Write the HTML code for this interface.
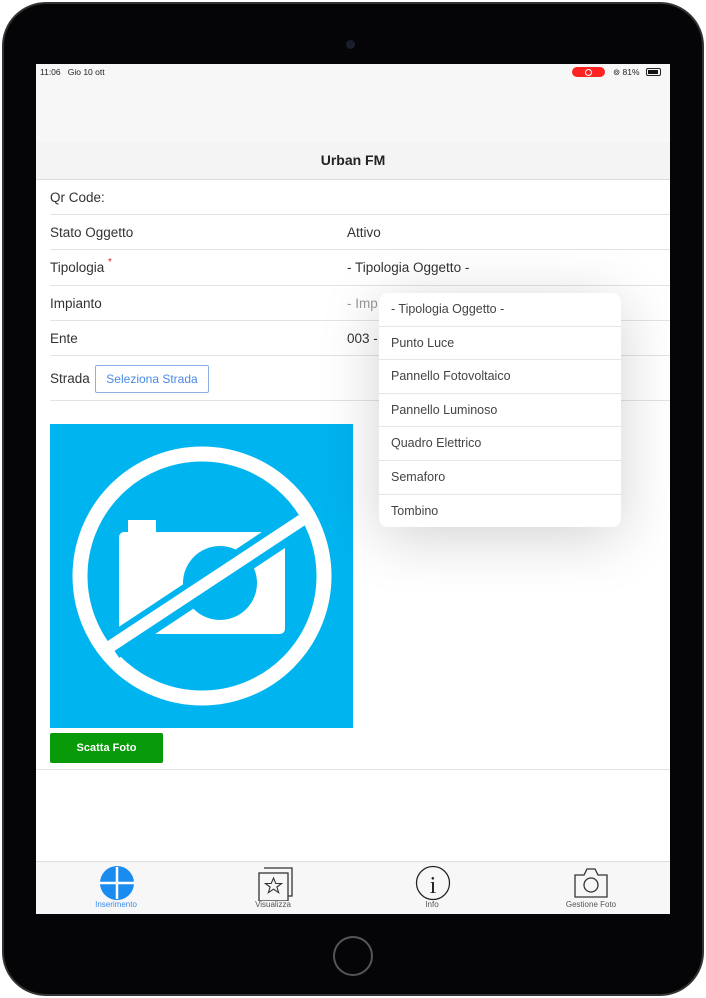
<!DOCTYPE html>
<html><head><style>
*{margin:0;padding:0;box-sizing:border-box}
body{width:706px;height:998px;background:#fff;position:relative;overflow:hidden;font-family:"Liberation Sans",sans-serif}
.dev{position:absolute;left:2px;top:2px;width:702px;height:994px;background:#050507;border-radius:44px;border:2px solid #333}
.scr{position:absolute;left:36px;top:64px;width:634px;height:850px;background:#fff;overflow:hidden}
.a{position:absolute}
.row{position:absolute;left:14px;right:0;border-bottom:1px solid #e3e3e3;font-size:13.5px;color:#333}
.dd{position:absolute;left:343px;top:229px;width:242px;height:234px;background:#fff;border-radius:9px;box-shadow:0 10px 60px rgba(0,0,0,.18)}
.it{height:33.6px;line-height:33px;padding-left:12px;font-size:12.5px;color:#444;border-bottom:1px solid #e6e6e6;margin-left:0}
.tab{position:absolute;top:38px;font-size:8px;color:#555;text-align:center;width:80px}
</style></head><body>
<div class="dev"></div>
<div class="a" style="left:346px;top:40px;width:9px;height:9px;border-radius:50%;background:#1a1d2a"></div>
<div class="a" style="left:333px;top:936px;width:40px;height:40px;border-radius:50%;border:2px solid #555"></div>
<div class="scr">
 <div class="a" style="left:0;top:0;width:634px;height:116px;background:#f7f7f7"></div>
 <div class="a" style="left:4px;top:3px;font-size:8.5px;color:#222">11:06&nbsp;&nbsp; Gio 10 ott</div>
 <div class="a" style="left:536px;top:3px;width:33px;height:10px;background:#f22;border-radius:5px"><div style="margin:1.5px auto;width:7px;height:7px;border:1.5px solid #fff;border-radius:50%"></div></div>
 <div class="a" style="left:577px;top:3px;font-size:8.5px;color:#222">⊚ 81%</div>
 <div class="a" style="left:610px;top:4px;width:15px;height:8px;border:1px solid #222;border-radius:2px;padding:1px"><div style="width:10px;height:4px;background:#111"></div></div>
 <div class="a" style="left:0;top:78px;width:634px;height:38px;background:#f4f4f4;border-bottom:1px solid #ddd"></div>
 <div class="a" style="left:0;top:88px;width:634px;text-align:center;font-size:14px;font-weight:bold;color:#222">Urban FM</div>
 <div class="row" style="top:116px;height:35px;line-height:35px">Qr Code:</div>
 <div class="row" style="top:151px;height:35px;line-height:35px">Stato Oggetto<span class="a" style="left:297px">Attivo</span></div>
 <div class="row" style="top:186px;height:36px;line-height:35px">Tipologia <span style="color:#d22;font-size:10px;vertical-align:top;line-height:26px">*</span><span class="a" style="left:297px">- Tipologia Oggetto -</span></div>
 <div class="row" style="top:222px;height:35px;line-height:35px">Impianto<span class="a" style="left:297px;color:#999">- Imp</span></div>
 <div class="row" style="top:257px;height:35px;line-height:35px">Ente<span class="a" style="left:297px">003 -</span></div>
 <div class="row" style="top:292px;height:45px;line-height:45px">Strada</div>
 <div class="a" style="left:59px;top:301px;width:114px;height:28px;border:1px solid #8ab0e6;border-radius:2px;color:#4a8ae6;font-size:12px;line-height:27px;text-align:center">Seleziona Strada</div>
 <svg class="a" style="left:14px;top:360px" width="303" height="304" viewBox="0 0 303 304">
  <rect width="303" height="304" fill="#00b4ef"/>
  <circle cx="152" cy="152" r="122" fill="none" stroke="#fff" stroke-width="15"/>
  <rect x="69" y="108" width="166" height="102" rx="5" fill="#fff"/>
  <rect x="78" y="96" width="28" height="14" fill="#fff"/>
  <circle cx="170" cy="159" r="37" fill="#00b4ef"/>
  <line x1="62" y1="223" x2="246" y2="101" stroke="#00b4ef" stroke-width="26"/>
  <line x1="52" y1="283" x2="252" y2="147" stroke="#fff" stroke-width="0"/>
  <line x1="55" y1="226" x2="252" y2="96" stroke="#fff" stroke-width="12"/>
 </svg>
 <div class="a" style="left:14px;top:669px;width:113px;height:30px;background:#089a08;border-radius:2px;color:#fff;font-weight:bold;font-size:11px;line-height:30px;text-align:center">Scatta Foto</div>
 <div class="a" style="left:0;top:705px;width:634px;border-top:1px solid #e3e3e3"></div>
 <div class="dd">
  <div class="it">- Tipologia Oggetto -</div>
  <div class="it">Punto Luce</div>
  <div class="it">Pannello Fotovoltaico</div>
  <div class="it">Pannello Luminoso</div>
  <div class="it">Quadro Elettrico</div>
  <div class="it">Semaforo</div>
  <div class="it" style="border:none">Tombino</div>
 </div>
 <div class="a" style="left:0;top:797px;width:634px;height:53px;background:#f7f7f7;border-top:1px solid #ddd">
  <svg class="a" style="left:63px;top:3px" width="36" height="36"><circle cx="18" cy="18" r="17" fill="#1a8cf0"/><path d="M18 2V34M1 18H35" stroke="#fff" stroke-width="2.5"/></svg>
  <div class="tab" style="left:40px;color:#3a8df0">Inserimento</div>
  <svg class="a" style="left:221px;top:3px" width="36" height="36"><path d="M7 3H35V31H31" fill="none" stroke="#333" stroke-width="1.3"/><rect x="2" y="8" width="29" height="28" fill="#f7f7f7" stroke="#333" stroke-width="1.3"/><path d="M16.5 13l2.3 5.5h5.8l-4.7 3.5 1.8 5.7-5.2-3.5-5.2 3.5 1.8-5.7-4.7-3.5h5.8z" fill="none" stroke="#333" stroke-width="1.1"/></svg>
  <div class="tab" style="left:197px">Visualizza</div>
  <svg class="a" style="left:379px;top:3px" width="36" height="36"><circle cx="18" cy="18" r="16.5" fill="none" stroke="#222" stroke-width="1.3"/><text x="18" y="28" font-family="Liberation Serif,serif" font-size="24" text-anchor="middle" fill="#222">i</text></svg>
  <div class="tab" style="left:356px">Info</div>
  <svg class="a" style="left:537px;top:4px" width="36" height="32"><path d="M2 9H11L14 3H22L25 9H34V31H2Z" fill="none" stroke="#333" stroke-width="1.3"/><circle cx="18" cy="19" r="7" fill="none" stroke="#333" stroke-width="1.3"/></svg>
  <div class="tab" style="left:515px">Gestione Foto</div>
 </div>
</div>
</body></html>
